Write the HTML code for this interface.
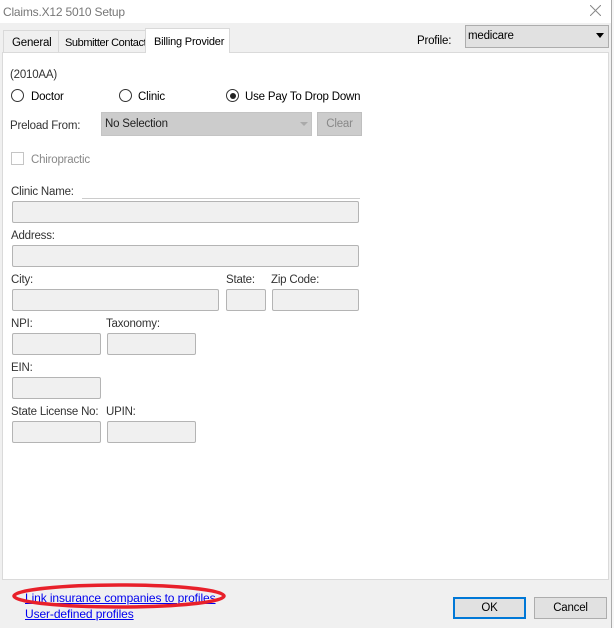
<!DOCTYPE html><html><head><style>
*{margin:0;padding:0;box-sizing:border-box}
body{width:614px;height:628px;background:#fff;font-family:"Liberation Sans",sans-serif;font-size:11.5px;letter-spacing:-0.2px;color:#000;position:relative;overflow:hidden}
.a{position:absolute;white-space:nowrap}
.t{margin-top:2px}
.in{position:absolute;background:#f0f0f0;border:1px solid #b4b4b4;border-radius:2px;height:22px}
.l{position:absolute;color:#333;white-space:nowrap;margin-top:2px}
.r{position:absolute;width:13px;height:13px;border:1px solid #333;border-radius:50%;background:#fff}
</style></head><body>
<div class="a" style="left:0;top:0;width:614px;height:23px;background:#fff"></div>
<div class="a" style="left:3px;top:5px;color:#777;font-size:12px">Claims.X12 5010 Setup</div>
<svg class="a" style="left:590px;top:5px" width="11" height="11"><path d="M0 0L11 11M11 0L0 11" stroke="#888" stroke-width="1"/></svg>
<div class="a" style="left:0;top:23px;width:611px;height:557px;background:#f0f0f0"></div>
<div class="a" style="left:611px;top:0;width:3px;height:628px;background:#f6f6f6;border-left:1px solid #aaa"></div>
<div class="a" style="left:2px;top:52px;width:607px;height:528px;background:#fff;border:1px solid #dadada"></div>
<div class="a" style="left:3px;top:30px;width:56px;height:22px;border:1px solid #d9d9d9;border-bottom:none;padding:6px 0 0 8px">General</div>
<div class="a" style="left:58px;top:30px;width:88px;height:22px;border:1px solid #d9d9d9;border-bottom:none;padding:6px 0 0 6px;font-size:11px;letter-spacing:-0.4px">Submitter Contact</div>
<div class="a" style="left:145px;top:28px;width:85px;height:25px;background:#fff;border:1px solid #d9d9d9;border-bottom:none;padding:7px 0 0 8px;font-size:11px">Billing Provider</div>
<div class="a t" style="left:417px;top:33px">Profile:</div>
<div class="a" style="left:465px;top:25px;width:144px;height:23px;background:#e1e1e1;border:1px solid #adadad;padding:4px 0 0 2px">medicare</div>
<div class="a" style="left:596px;top:33px;width:0;height:0;border-left:4px solid transparent;border-right:4px solid transparent;border-top:5px solid #000"></div>
<div class="l" style="left:10px;top:67px">(2010AA)</div>
<div class="r" style="left:11px;top:89px"></div><div class="a t" style="left:31px;top:89px">Doctor</div>
<div class="r" style="left:119px;top:89px"></div><div class="a t" style="left:138px;top:89px">Clinic</div>
<div class="r" style="left:226px;top:89px"></div><div class="a" style="left:229.5px;top:92.5px;width:6px;height:6px;border-radius:50%;background:#222"></div>
<div class="a t" style="left:245px;top:89px">Use Pay To Drop Down</div>
<div class="l" style="left:10px;top:118px">Preload From:</div>
<div class="a" style="left:101px;top:112px;width:211px;height:24px;background:#ccc;border:1px solid #c4c4c4;padding:5px 0 0 3px;color:#222">No Selection</div>
<div class="a" style="left:300px;top:122px;width:0;height:0;border-left:4px solid transparent;border-right:4px solid transparent;border-top:4px solid #aaa"></div>
<div class="a" style="left:317px;top:112px;width:45px;height:24px;background:#ccc;border:1px solid #bfbfbf;color:#888;text-align:center;padding-top:5px">Clear</div>
<div class="a" style="left:11px;top:152px;width:13px;height:13px;border:1px solid #c5c5c5"></div>
<div class="a t" style="left:31px;top:152px;color:#888">Chiropractic</div>
<div class="l" style="left:11px;top:184px">Clinic Name:</div>
<div class="a" style="left:82px;top:198px;width:278px;height:1px;background:#ccc"></div>
<div class="in" style="left:12px;top:201px;width:347px"></div>
<div class="l" style="left:11px;top:228px">Address:</div>
<div class="in" style="left:12px;top:245px;width:347px"></div>
<div class="l" style="left:11px;top:272px">City:</div>
<div class="l" style="left:226px;top:272px">State:</div>
<div class="l" style="left:271px;top:272px">Zip Code:</div>
<div class="in" style="left:12px;top:289px;width:207px"></div>
<div class="in" style="left:226px;top:289px;width:40px"></div>
<div class="in" style="left:272px;top:289px;width:87px"></div>
<div class="l" style="left:11px;top:316px">NPI:</div>
<div class="l" style="left:106px;top:316px">Taxonomy:</div>
<div class="in" style="left:12px;top:333px;width:89px"></div>
<div class="in" style="left:107px;top:333px;width:89px"></div>
<div class="l" style="left:11px;top:360px">EIN:</div>
<div class="in" style="left:12px;top:377px;width:89px"></div>
<div class="l" style="left:11px;top:404px">State License No:</div>
<div class="l" style="left:106px;top:404px">UPIN:</div>
<div class="in" style="left:12px;top:421px;width:89px"></div>
<div class="in" style="left:107px;top:421px;width:89px"></div>
<div class="a" style="left:0;top:580px;width:611px;height:48px;background:#f0f0f0"></div>
<div class="a" style="left:25px;top:591px;color:#00e;text-decoration:underline;font-size:12px;letter-spacing:-0.1px">Link insurance companies to profiles</div>
<div class="a" style="left:25px;top:607px;color:#00e;text-decoration:underline;font-size:12px;letter-spacing:-0.1px">User-defined profiles</div>
<svg class="a" style="left:10px;top:580px" width="220" height="32"><ellipse cx="109" cy="16" rx="105" ry="11" fill="none" stroke="#e8202a" stroke-width="3.5"/></svg>
<div class="a" style="left:453px;top:597px;width:73px;height:22px;background:#e1e1e1;border:2px solid #0078d7;text-align:center;padding-top:3px">OK</div>
<div class="a" style="left:534px;top:597px;width:73px;height:22px;background:#e1e1e1;border:1px solid #adadad;text-align:center;padding-top:4px">Cancel</div>
</body></html>
